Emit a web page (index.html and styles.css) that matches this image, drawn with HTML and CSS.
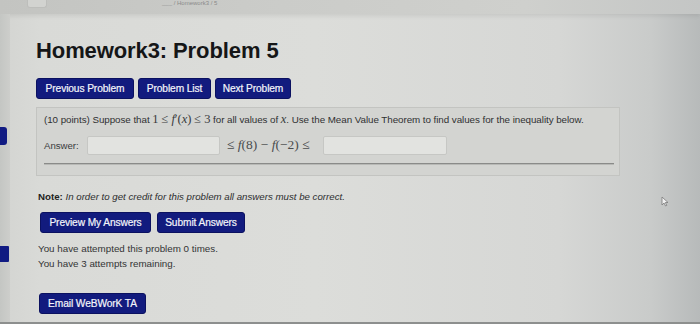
FILE: index.html
```html
<!DOCTYPE html>
<html>
<head>
<meta charset="utf-8">
<link rel="stylesheet" href="styles.css">
</head>
<body>
<div class="topbar">
  <span class="topbtn"></span>
  <span class="crumbs"><span class="crumb-link">___</span> / Homework3 / 5</span>
</div>
<div class="layout">
  <aside class="sidebar">
    <span class="tab tab-a"></span>
    <span class="tab tab-b"></span>
  </aside>
  <main class="main">
    <h1 class="title">Homework3: Problem 5</h1>
    <nav class="nav">
      <button class="btn">Previous Problem</button>
      <button class="btn">Problem List</button>
      <button class="btn">Next Problem</button>
    </nav>
    <section class="problem">
      <p class="statement">(10 points) Suppose that <span class="math">1 ≤ <i>f</i>′(<i>x</i>) ≤ 3</span> for all values of <span class="math"><i>x</i></span>. Use the Mean Value Theorem to find values for the inequality below.</p>
      <div class="answer-row">
        <span class="label">Answer:</span>
        <span class="input input-a"></span>
        <span class="math ineq">≤ <i>f</i>(8) − <i>f</i>(−2) ≤</span>
        <span class="input input-b"></span>
      </div>
      <hr class="rule">
    </section>
    <p class="note"><b>Note:</b> <i>In order to get credit for this problem all answers must be correct.</i></p>
    <div class="actions">
      <button class="btn btn-wide">Preview My Answers</button>
      <button class="btn">Submit Answers</button>
    </div>
    <p class="attempts">You have attempted this problem 0 times.<br>You have 3 attempts remaining.</p>
    <button class="btn btn-email">Email WeBWorK TA</button>
  </main>
</div>
<svg class="cursor" width="8" height="11" viewBox="0 0 8 11"><path d="M1 1 L1 9 L3 7 L4.6 10 L5.8 9.4 L4.3 6.5 L7 6.5 Z" fill="#f2f2f2" stroke="#7a7a7a" stroke-width="0.8"/></svg>
</body>
</html>
```

FILE: styles.css
```css
html, body {
  margin: 0;
  padding: 0;
}
body {
  width: 700px;
  height: 324px;
  overflow: hidden;
  position: relative;
  font-family: "Liberation Sans", Arial, sans-serif;
  color: #2e2f30;
  background: linear-gradient(to right, #d3d4d1 0, #d9dad7 40px, #dcddda 45%, #d6d7d5 80%, #c9cbca 93%, #b7baba 100%);
  border-bottom: 2px solid #8d8f8e;
  box-sizing: border-box;
}
.topbar {
  height: 14px;
  background: linear-gradient(to right, #c3c4c1, #cbccc9 40%, #cfd0cd 75%, #c4c6c5);
  box-shadow: 0 2px 4px rgba(0, 0, 0, 0.08);
  display: flex;
  align-items: flex-start;
  overflow: hidden;
}
.topbtn {
  width: 18px;
  height: 7px;
  margin-left: 27px;
  background: #d2d3d0;
  border: 1px solid #bdbebb;
  border-top: none;
  border-radius: 0 0 3px 3px;
}
.crumbs {
  margin-left: 115px;
  font-size: 6px;
  line-height: 6px;
  color: #8a8b8a;
}
.crumb-link {
  color: #666;
  font-weight: bold;
}
.layout {
  display: grid;
  grid-template-columns: 10px 1fr;
  height: 308px;
}
.sidebar {
  background: linear-gradient(to right, #c4c6c3, #cdcecb);
  display: flex;
  flex-direction: column;
  align-items: flex-start;
}
.tab {
  display: block;
  background: #101a82;
  border-radius: 0 3px 3px 0;
}
.tab-a {
  width: 7px;
  height: 18px;
  margin-top: 113px;
}
.tab-b {
  width: 9px;
  height: 16px;
  margin-top: 101px;
  border-radius: 0 1px 1px 0;
}
.main {
  padding-left: 26px;
}
.title {
  margin: 24px 0 0 0;
  font-size: 22px;
  line-height: 26px;
  font-weight: bold;
  color: #151617;
  letter-spacing: -0.1px;
}
.nav {
  display: flex;
  gap: 4px;
  margin-top: 14px;
}
.btn {
  font-family: "Liberation Sans", Arial, sans-serif;
  font-size: 10.2px;
  line-height: 12px;
  color: #f4f5fa;
  background: #121b7e;
  border: 1px solid #0b1160;
  border-radius: 3px;
  padding: 3px 0 3px;
  height: 21px;
  box-sizing: border-box;
  white-space: nowrap;
  text-align: center;
  letter-spacing: -0.1px;
  -webkit-text-stroke: 0.2px #f4f5fa;
}
.nav .btn:first-child {
  width: 98px;
}
.nav .btn:nth-child(2) {
  width: 73px;
}
.nav .btn:nth-child(3) {
  width: 76px;
}
.problem {
  margin-top: 8px;
  width: 584px;
  height: 69px;
  box-sizing: border-box;
  background: #d3d4d1;
  border: 1px solid #c3c4c1;
  padding: 5px 6px 0 7px;
}
.statement {
  margin: 0;
  font-size: 9.8px;
  line-height: 12px;
  color: #303132;
  white-space: nowrap;
  letter-spacing: -0.05px;
}
.math {
  font-family: "Liberation Serif", "Times New Roman", serif;
  font-size: 12.5px;
  color: #383a3c;
}
.answer-row {
  display: flex;
  align-items: center;
  margin-top: 9px;
  height: 20px;
}
.label {
  font-size: 9.6px;
  color: #3a3b3c;
  width: 43px;
}
.input {
  height: 19px;
  box-sizing: border-box;
  background: #e2e3e0;
  border: 1px solid #c6c7c4;
  border-radius: 2px;
}
.input-a {
  width: 133px;
}
.ineq {
  margin-left: 7px;
  width: 96px;
  font-size: 13.5px;
  color: #4a4c4e;
  white-space: nowrap;
}
.input-b {
  width: 124px;
}
.rule {
  margin: 8px 0 0 0;
  border: none;
  border-top: 1px solid #8a8b89;
  border-bottom: 1px solid #b8b9b6;
  width: 570px;
}
.note {
  margin: 15px 0 0 2px;
  font-size: 9.7px;
  line-height: 12px;
  color: #2c2d2e;
}
.note b {
  color: #222;
}
.actions {
  display: flex;
  gap: 6px;
  margin: 9px 0 0 4px;
}
.actions .btn {
  height: 21px;
}
.btn-wide {
  width: 111px;
}
.actions .btn:nth-child(2) {
  width: 88px;
}
.attempts {
  margin: 8px 0 0 2px;
  font-size: 9.8px;
  line-height: 15px;
  color: #333435;
}
.btn-email {
  margin: 22px 0 0 3px;
  width: 107px;
}
.cursor {
  position: absolute;
  left: 661px;
  top: 196px;
}
```
